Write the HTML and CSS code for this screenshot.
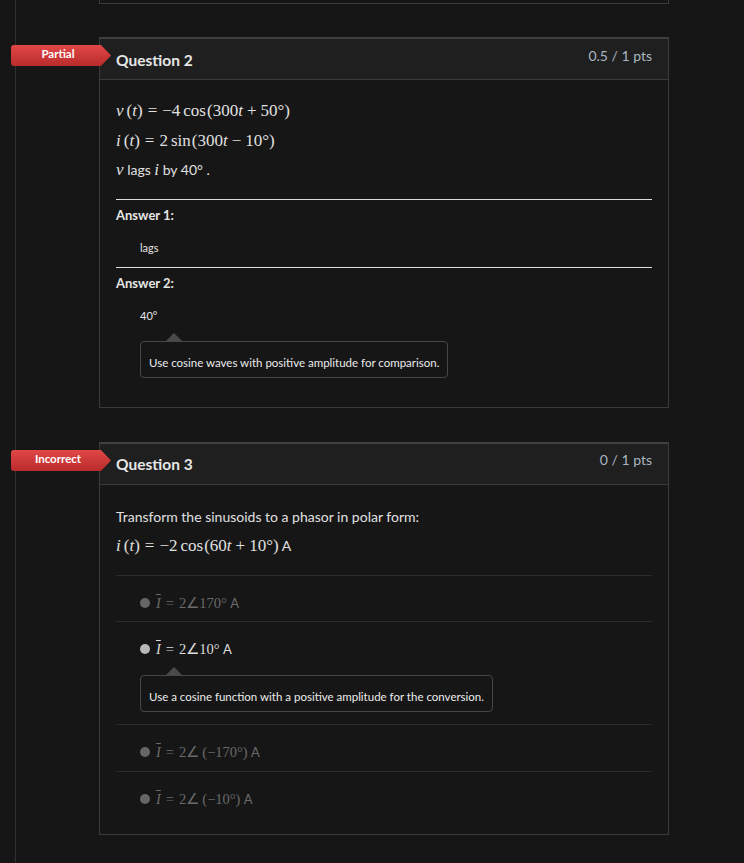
FILE: index.html
```html
<!DOCTYPE html>
<html>
<head>
<meta charset="utf-8">
<link rel="stylesheet" href="styles.css">
</head>
<body>
<div class="rail">
  <div class="card-end"></div>

  <div class="card q2">
    <div class="badge"><span>Partial</span></div>
    <div class="card-head">
      <h2 class="title">Question 2</h2>
      <div class="pts">0.5 / 1 pts</div>
    </div>
    <div class="card-body">
      <div class="mline"><span class="m"><i>v</i><span class="sp">(<i>t</i>)</span><span class="op">=</span>−4<span class="fn">cos</span>(300<i>t</i><span class="bin">+</span>50°)</span></div>
      <div class="mline"><span class="m"><i>i</i><span class="sp">(<i>t</i>)</span><span class="op">=</span>2<span class="fn">sin</span>(300<i>t</i><span class="bin">−</span>10°)</span></div>
      <div class="mline text"><span class="m"><i>v</i></span> lags <span class="m"><i>i</i></span> by 40° .</div>
      <div class="answers">
        <div class="answer">
          <div class="answer-label">Answer 1:</div>
          <div class="answer-val">lags</div>
        </div>
        <div class="answer last">
          <div class="answer-label">Answer 2:</div>
          <div class="answer-val">40°</div>
          <div class="tip t1">Use cosine waves with positive amplitude for comparison.</div>
        </div>
      </div>
    </div>
  </div>

  <div class="card q3">
    <div class="badge"><span>Incorrect</span></div>
    <div class="card-head">
      <h2 class="title">Question 3</h2>
      <div class="pts">0 / 1 pts</div>
    </div>
    <div class="card-body b3">
      <p class="prompt">Transform the sinusoids to a phasor in polar form:</p>
      <p class="prompt formula"><span class="m"><i>i</i><span class="sp">(<i>t</i>)</span><span class="op">=</span>−2<span class="fn">cos</span>(60<i>t</i><span class="bin">+</span>10°)</span> A</p>
      <div class="options">
        <div class="opt dim"><div class="opt-line"><span class="dot"></span><span class="opt-text"><span class="m"><i class="bar">I</i><span class="op">=</span>2∠170°</span> <span class="unit">A</span></span></div></div>
        <div class="opt sel"><div class="opt-line"><span class="dot"></span><span class="opt-text"><span class="m"><i class="bar">I</i><span class="op">=</span>2∠10°</span> <span class="unit">A</span></span></div>
          <div class="tip t2">Use a cosine function with a positive amplitude for the conversion.</div>
        </div>
        <div class="opt dim r3"><div class="opt-line"><span class="dot"></span><span class="opt-text"><span class="m"><i class="bar">I</i><span class="op">=</span>2∠<span class="sp">(</span>−170°)</span> <span class="unit">A</span></span></div></div>
        <div class="opt dim last"><div class="opt-line"><span class="dot"></span><span class="opt-text"><span class="m"><i class="bar">I</i><span class="op">=</span>2∠<span class="sp">(</span>−10°)</span> <span class="unit">A</span></span></div></div>
      </div>
    </div>
  </div>
</div>
</body>
</html>
```

FILE: styles.css
```css
* { box-sizing: border-box; }
html, body {
  margin: 0;
  background: #161616;
  color: #e0e0e0;
  font-family: Lato, "Open Sans", sans-serif;
}
.rail {
  margin-left: 15px;
  border-left: 1px solid #303030;
  min-height: 863px;
  padding-left: 83px;
}
.card-end {
  width: 570px;
  height: 4px;
  border: 1px solid #3a3a3a;
  border-top: none;
}
.card {
  position: relative;
  width: 570px;
  border: 1px solid #3a3a3a;
  border-top: 2px solid #404040;
  background: #161616;
}
.q2 { margin-top: 33px; height: 371px; }
.q3 { margin-top: 34px; height: 393px; }

.badge {
  position: absolute;
  left: -89px;
  top: 6px;
  width: 90px;
  height: 21px;
  border-radius: 3px 0 0 3px;
  background: linear-gradient(#e24747, #b92b2b);
  color: #fff;
  font-size: 11.5px;
  font-weight: 700;
  line-height: 20px;
  text-align: center;
  z-index: 2;
}
.badge::after {
  content: "";
  position: absolute;
  right: -10px;
  top: 0;
  width: 10px;
  height: 21px;
  background: linear-gradient(#e24747, #b92b2b);
  clip-path: polygon(0 0, 100% 50%, 0 100%);
}
.badge span { position: relative; left: 2px; top: -1px; }

.card-head {
  height: 41px;
  background: #1f1f1f;
  border-bottom: 1px solid #3a3a3a;
  display: flex;
  justify-content: space-between;
  align-items: flex-start;
  padding: 0 16px;
}
.title {
  margin: 0;
  padding-top: 11px;
  font-size: 15.5px;
  font-weight: 700;
  line-height: 20px;
  color: #e6e6e6;
}
.q3 .title { padding-top: 10px; }
.pts {
  padding-top: 8px;
  font-size: 14px;
  line-height: 18px;
  color: #aab6c2;
}
.q3 .pts { padding-top: 7px; }

.card-body { padding: 15px 16px 0 16px; }
.m {
  font-family: "Liberation Serif", "Times New Roman", serif;
  font-size: 17px;
}
.m i { font-style: italic; }
.sp { margin-left: 3px; }
.op { margin: 0 5px; }
.bin { margin: 0 4px; }
.fn { margin: 0 1px 0 3px; }
.mline {
  height: 30px;
  line-height: 30px;
  color: #e0e0e0;
}
.mline.text { font-size: 14px; }
.mline.text .m { font-size: 17px; }

.answers { margin-top: 14px; }
.answer {
  border-top: 1px solid #dcdcdc;
  padding-top: 7px;
  height: 68px;
}
.answer.last { height: auto; }
.answer-label {
  font-size: 13px;
  font-weight: 700;
  line-height: 16px;
  color: #e6e6e6;
}
.answer-val {
  margin-top: 17px;
  padding-left: 24px;
  font-size: 11px;
  line-height: 16px;
  color: #e6e6e6;
}
.tip {
  position: relative;
  width: fit-content;
  padding: 13px 8px 0 8px;
  height: 37px;
  line-height: 16px;
  border: 1px solid #474747;
  border-radius: 4px;
  font-size: 11.5px;
  color: #ececec;
  background: #161616;
}
.tip.t1 { margin: 17px 0 0 24px; }
.tip::before {
  content: "";
  position: absolute;
  left: 25px;
  top: -9px;
  border-left: 8px solid transparent;
  border-right: 8px solid transparent;
  border-bottom: 8px solid #4a4a4a;
}

.b3 { padding-top: 22px; }
.prompt {
  margin: 0;
  font-size: 14px;
  line-height: 20px;
  color: #e0e0e0;
}
.formula { margin-top: 9px; }
.options { margin-top: 19px; }
.opt {
  border-top: 1px solid #2c2c2c;
  padding: 17px 0 0 24px;
  height: 46px;
  font-size: 13px;
}
.opt.sel { height: 103px; }
.opt.r3 { height: 47px; }
.opt.last { height: auto; }
.opt-line {
  height: 20px;
  line-height: 20px;
  display: flex;
  align-items: center;
}
.opt-text { white-space: pre; }
.opt .m { font-size: 14.5px; }
.opt .op { margin: 0 5px; }
.dot {
  flex: none;
  width: 10px;
  height: 10px;
  border-radius: 50%;
  margin-right: 6px;
}
.dim { color: #6a6a6a; }
.dim .dot { background: #666; }
.sel { color: #dcdcdc; }
.sel .dot { background: #b8b8b8; }
.unit { font-family: Lato, sans-serif; font-size: 13px; }
.bar {
  text-decoration: overline;
  text-decoration-thickness: 1px;
}
.tip.t2 { margin: 16px 0 0 0; }
```
